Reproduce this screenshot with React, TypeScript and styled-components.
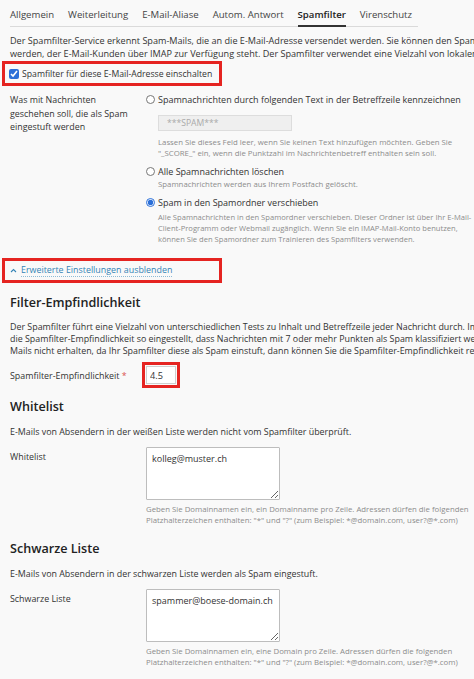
import React from "react";
import styled, { createGlobalStyle } from "styled-components";

const Global = createGlobalStyle`
  html, body { margin: 0; padding: 0; background: #f9f9f9; overflow: hidden; }
  body { font-family: "Open Sans", "DejaVu Sans", sans-serif; color: #333; }
  * { box-sizing: border-box; }
`;

const Page = styled.div`
  width: 474px;
  height: 679px;
  overflow: hidden;
  padding: 0 0 0 10px;
  font-size: 8.9px;
  font-stretch: 90%;
`;

const Tabs = styled.nav`
  display: inline-flex;
  gap: 14px;
  padding-top: 8px;
  padding-right: 6px;
  border-bottom: 1px solid #dadada;
`;

const Tab = styled.div<{ $active?: boolean }>`
  font-size: 9.6px;
  line-height: 13px;
  padding-bottom: 4px;
  margin-bottom: -1px;
  white-space: nowrap;
  color: ${(p) => (p.$active ? "#222" : "#444")};
  font-weight: ${(p) => (p.$active ? 600 : 500)};
  border-bottom: 2px solid ${(p) => (p.$active ? "#333" : "transparent")};
`;

const Para = styled.p<{ $top: number; $lh?: number; $size?: number }>`
  margin: ${(p) => p.$top}px 0 0 0;
  line-height: ${(p) => p.$lh ?? 13}px;
  font-size: ${(p) => p.$size ?? 8.9}px;
  white-space: nowrap;
  color: #333;
`;

const Line = styled.span`
  display: block;
`;

const Marked = styled.div<{ $top: number }>`
  margin: ${(p) => p.$top}px 0 0 -8px;
  width: 220px;
  height: 25px;
  border: 3px solid #e52421;
  display: flex;
  align-items: center;
  padding-left: 4px;
  gap: 3px;
`;

const Check = styled.input`
  width: 10px;
  height: 10px;
  margin: 0;
  accent-color: #2b6fd8;
`;

const CheckLabel = styled.label`
  font-size: 8.7px;
  white-space: nowrap;
  color: #333;
`;

const FormRow = styled.div<{ $top: number }>`
  display: grid;
  grid-template-columns: 136px 1fr;
  margin-top: ${(p) => p.$top}px;
`;

const RowLabel = styled.div<{ $pt?: number; $lh?: number }>`
  line-height: ${(p) => p.$lh ?? 13}px;
  padding-top: ${(p) => p.$pt ?? 0}px;
  color: #333;
  white-space: nowrap;
`;

const Options = styled.div`
  display: flex;
  flex-direction: column;
`;

const Option = styled.label<{ $top: number }>`
  display: flex;
  align-items: center;
  gap: 3px;
  margin-top: ${(p) => p.$top}px;
  line-height: 13px;
  font-size: 9px;
  white-space: nowrap;
  color: #333;
`;

const Radio = styled.input`
  width: 9px;
  height: 9px;
  margin: 0;
  accent-color: #2b6fd8;
`;

const Indent = styled.div`
  padding-left: 12px;
  display: flex;
  flex-direction: column;
`;

const SubjectInput = styled.input`
  margin-top: 8.5px;
  width: 134px;
  height: 16px;
  background: #efefef;
  border: 1px solid #dddddd;
  font-family: inherit;
  font-size: 8.6px;
  font-stretch: 90%;
  color: #a9a9a9;
  padding: 0 8px;
  outline: none;
`;

const Help = styled.div<{ $top: number; $size?: number }>`
  margin-top: ${(p) => p.$top}px;
  font-size: ${(p) => p.$size ?? 7.8}px;
  line-height: 11px;
  color: #8c8c8c;
  white-space: nowrap;
`;

const Toggle = styled.a`
  display: flex;
  align-items: center;
  gap: 4px;
  padding-left: 1px;
  color: #3484b6;
  font-size: 8.9px;
  white-space: nowrap;
  text-decoration: none;
  cursor: pointer;
`;

const ToggleText = styled.span`
  border-bottom: 1px dotted #8dbbd6;
  line-height: 12px;
`;

const Heading = styled.h2<{ $top: number }>`
  margin: ${(p) => p.$top}px 0 0 0;
  font-size: 12.6px;
  line-height: 20px;
  font-weight: 600;
  color: #222;
  white-space: nowrap;
`;

const NumRow = styled.div`
  display: grid;
  grid-template-columns: 132px auto;
  align-items: center;
  margin-top: 5px;
`;

const Required = styled.span`
  color: #d9534f;
`;

const NumFrame = styled.div`
  width: 38px;
  height: 26px;
  border: 3px solid #e52421;
  padding: 1px;
`;

const NumInput = styled.input`
  width: 30px;
  height: 18px;
  border: 1px solid #cfcfcf;
  background: #fff;
  font-family: inherit;
  font-size: 9.2px;
  font-stretch: 90%;
  color: #333;
  padding: 0 3px;
  outline: none;
`;

const ListArea = styled.textarea`
  width: 134px;
  height: 53px;
  background: #fff;
  border: 1px solid #bdbdbd;
  border-radius: 1px;
  font-family: inherit;
  font-size: 9px;
  font-stretch: 90%;
  color: #333;
  padding: 4px 5px;
  resize: both;
  outline: none;
  display: block;
  overflow: hidden;
  white-space: pre;
`;

const Field = styled.div`
  display: flex;
  flex-direction: column;
`;

function Chevron() {
  return (
    <svg width="7" height="5" viewBox="0 0 7 5" aria-hidden="true">
      <polyline points="1,4 3.5,1.5 6,4" fill="none" stroke="#3484b6" strokeWidth="1.1" />
    </svg>
  );
}

export default function App() {
  return (
    <>
      <Global />
      <Page>
        <Tabs>
          <Tab>Allgemein</Tab>
          <Tab>Weiterleitung</Tab>
          <Tab>E-Mail-Aliase</Tab>
          <Tab>Autom. Antwort</Tab>
          <Tab $active>Spamfilter</Tab>
          <Tab>Virenschutz</Tab>
        </Tabs>

        <Para $top={7} $size={9.1}>
          <Line>
            Der Spamfilter-Service erkennt Spam-Mails, die an die E-Mail-Adresse versendet werden. Sie können den Spamfilter aktivieren und festlegen, was mit Spam geschehen soll.
          </Line>
          <Line>
            werden, der E-Mail-Kunden über IMAP zur Verfügung steht. Der Spamfilter verwendet eine Vielzahl von lokalen Tests und Netzwerktests.
          </Line>
        </Para>

        <Marked $top={1}>
          <Check type="checkbox" id="spam-on" defaultChecked />
          <CheckLabel htmlFor="spam-on">Spamfilter für diese E-Mail-Adresse einschalten</CheckLabel>
        </Marked>

        <FormRow $top={7}>
          <RowLabel $lh={13.5}>
            Was mit Nachrichten
            <br />
            geschehen soll, die als Spam
            <br />
            eingestuft werden
          </RowLabel>
          <Options>
            <Option $top={0}>
              <Radio type="radio" name="action" />
              Spamnachrichten durch folgenden Text in der Betreffzeile kennzeichnen
            </Option>
            <Indent>
              <SubjectInput type="text" defaultValue="***SPAM***" readOnly />
              <Help $top={6.5}>
                <Line>Lassen Sie dieses Feld leer, wenn Sie keinen Text hinzufügen möchten. Geben Sie</Line>
                <Line>"_SCORE_" ein, wenn die Punktzahl im Nachrichtenbetreff enthalten sein soll.</Line>
              </Help>
            </Indent>
            <Option $top={6}>
              <Radio type="radio" name="action" />
              Alle Spamnachrichten löschen
            </Option>
            <Indent>
              <Help $top={1}>Spamnachrichten werden aus Ihrem Postfach gelöscht.</Help>
            </Indent>
            <Option $top={6}>
              <Radio type="radio" name="action" defaultChecked />
              Spam in den Spamordner verschieben
            </Option>
            <Indent>
              <Help $top={3} $size={7.6}>
                <Line>Alle Spamnachrichten in den Spamordner verschieben. Dieser Ordner ist über Ihr E-Mail-</Line>
                <Line>Client-Programm oder Webmail zugänglich. Wenn Sie ein IMAP-Mail-Konto benutzen,</Line>
                <Line>können Sie den Spamordner zum Trainieren des Spamfilters verwenden.</Line>
              </Help>
            </Indent>
          </Options>
        </FormRow>

        <Marked $top={12.5}>
          <Toggle>
            <Chevron />
            <ToggleText>Erweiterte Einstellungen ausblenden</ToggleText>
          </Toggle>
        </Marked>

        <Heading $top={10}>Filter-Empfindlichkeit</Heading>
        <Para $top={8} $lh={12.3}>
          <Line>
            Der Spamfilter führt eine Vielzahl von unterschiedlichen Tests zu Inhalt und Betreffzeile jeder Nachricht durch. Im Anschluss wird eine Punktzahl berechnet.
          </Line>
          <Line>
            die Spamfilter-Empfindlichkeit so eingestellt, dass Nachrichten mit 7 oder mehr Punkten als Spam klassifiziert werden.
          </Line>
          <Line>
            Mails nicht erhalten, da Ihr Spamfilter diese als Spam einstuft, dann können Sie die Spamfilter-Empfindlichkeit reduzieren.
          </Line>
        </Para>

        <NumRow>
          <RowLabel>
            Spamfilter-Empfindlichkeit <Required>*</Required>
          </RowLabel>
          <NumFrame>
            <NumInput type="text" defaultValue="4.5" readOnly />
          </NumFrame>
        </NumRow>

        <Heading $top={9}>Whitelist</Heading>
        <Para $top={7.5}>E-Mails von Absendern in der weißen Liste werden nicht vom Spamfilter überprüft.</Para>

        <FormRow $top={9.5}>
          <RowLabel $pt={2.5}>Whitelist</RowLabel>
          <Field>
            <ListArea defaultValue="kolleg@muster.ch" readOnly />
            <Help $top={3.5}>
              <Line>Geben Sie Domainnamen ein, ein Domainname pro Zeile. Adressen dürfen die folgenden</Line>
              <Line>Platzhalterzeichen enthalten: "*" und "?" (zum Beispiel: *@domain.com, user?@*.com)</Line>
            </Help>
          </Field>
        </FormRow>

        <Heading $top={13.5}>Schwarze Liste</Heading>
        <Para $top={7.5}>E-Mails von Absendern in der schwarzen Liste werden als Spam eingestuft.</Para>

        <FormRow $top={9.5}>
          <RowLabel $pt={2.5}>Schwarze Liste</RowLabel>
          <Field>
            <ListArea defaultValue="spammer@boese-domain.ch" readOnly />
            <Help $top={3.5}>
              <Line>Geben Sie Domainnamen ein, eine Domain pro Zeile. Adressen dürfen die folgenden</Line>
              <Line>Platzhalterzeichen enthalten: "*" und "?" (zum Beispiel: *@domain.com, user?@*.com)</Line>
            </Help>
          </Field>
        </FormRow>
      </Page>
    </>
  );
}
